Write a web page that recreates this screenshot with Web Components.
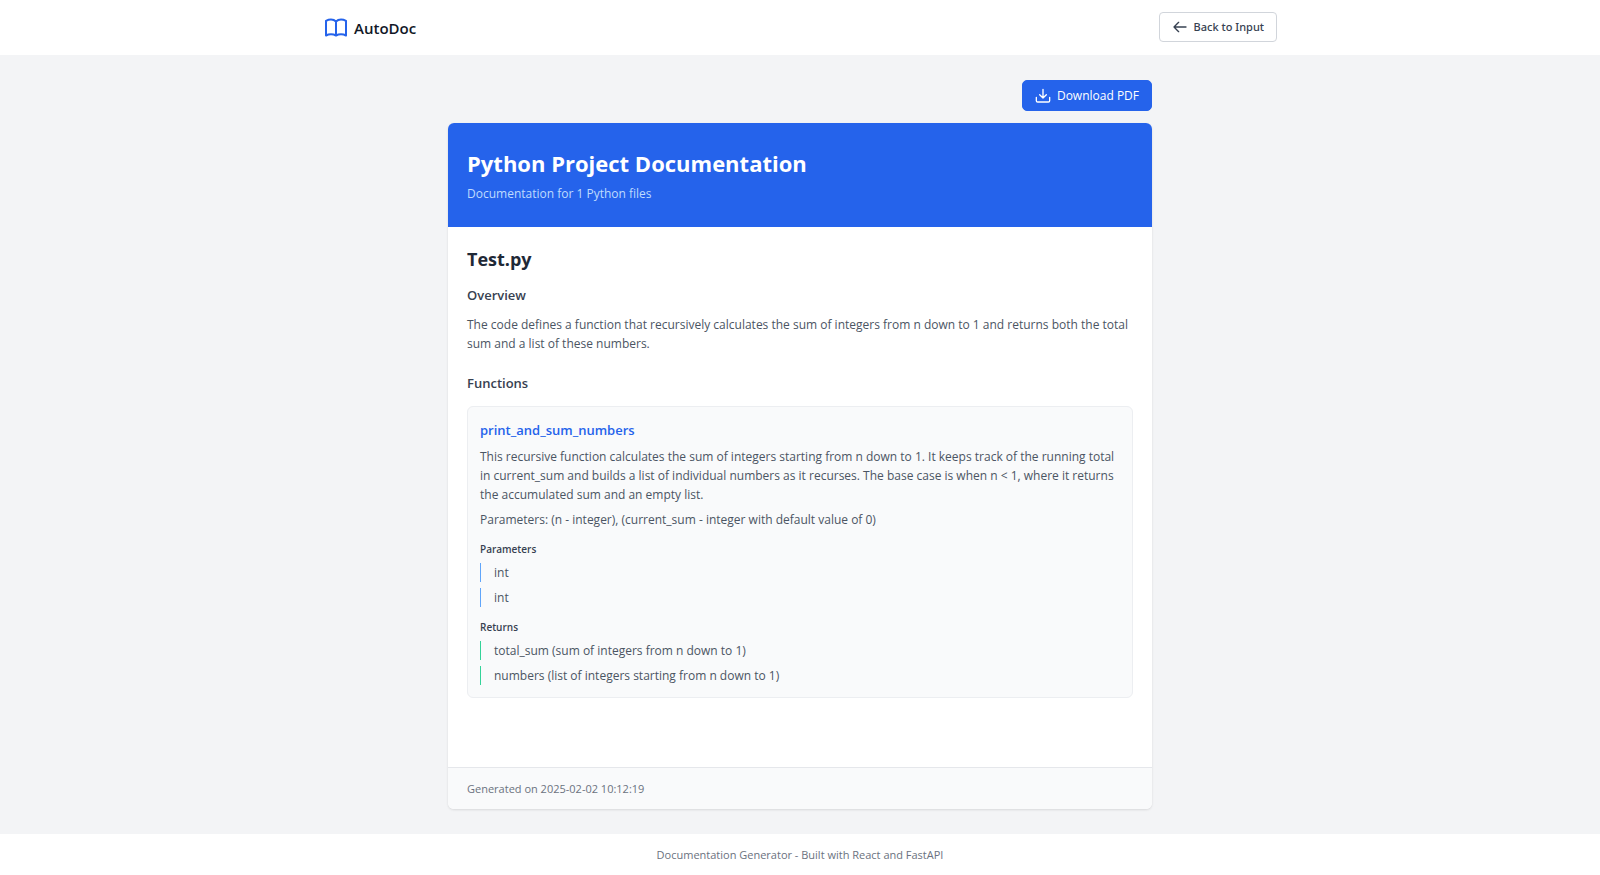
<!DOCTYPE html>
<html lang="en">
<head>
<meta charset="utf-8">
<meta name="viewport" content="width=device-width, initial-scale=1">
<title>AutoDoc</title>
<style>
  :root {
    --blue: #2563eb;
    --gray-50: #f9fafb;
    --gray-100: #f3f4f6;
    --gray-200: #e5e7eb;
    --gray-300: #d1d5db;
    --gray-500: #6b7280;
    --gray-600: #4b5563;
    --gray-700: #374151;
    --gray-800: #1f2937;
    --gray-900: #111827;
  }
  body {
    margin: 0;
    font-family: "Open Sans", "Noto Sans", sans-serif;
    font-size: 12px;
    line-height: 19px;
    color: var(--gray-600);
    background: var(--gray-100);
  }
</style>
</head>
<body>
<autodoc-app></autodoc-app>

<script>
const makeTemplate = (html) => {
  const template = document.createElement("template");
  template.innerHTML = html;
  return template;
};

class BaseElement extends HTMLElement {
  constructor() {
    super();
    this.attachShadow({ mode: "open" });
    this.shadowRoot.append(this.constructor.template.content.cloneNode(true));
  }
}

class AppHeader extends BaseElement {
  static template = makeTemplate(/*html*/ `
    <style>
      :host {
        display: block;
        background: #fff;
      }
      header {
        display: flex;
        align-items: center;
        justify-content: space-between;
        box-sizing: border-box;
        max-width: 1008px;
        margin: 0 auto;
        padding: 12px 27px 13px;
      }
      .brand {
        display: flex;
        align-items: center;
        gap: 6px;
        padding: 2px 0 0 1px;
        font-size: 15px;
        line-height: 24px;
        font-weight: 600;
        color: var(--gray-900);
      }
      svg {
        width: 24px;
        height: 20px;
        color: var(--blue);
      }
    </style>
    <header>
      <div class="brand">
        <svg viewBox="0 0 24 20" fill="none" stroke="currentColor" stroke-width="2" stroke-linecap="round" stroke-linejoin="round" aria-hidden="true">
          <path d="M12 3.500C10.500 2 8.500 1.500 7 1.500S3.500 2 2 2.800V17.500c1.500-.800 3.500-1.200 5-1.200s3.500.400 5 1.200c1.500-.800 3.500-1.200 5-1.200s3.500.400 5 1.200V2.800C20.500 2 18.500 1.500 17 1.500S13.500 2 12 3.500zM12 3.500v14"/>
        </svg>
        <span>AutoDoc</span>
      </div>
      <slot></slot>
    </header>
  `);
}

class AppButton extends BaseElement {
  static template = makeTemplate(/*html*/ `
    <style>
      :host {
        display: block;
      }
      button {
        display: flex;
        align-items: center;
        gap: 6px;
        margin: 0;
        padding: 6px 12px;
        border: 1px solid var(--gray-300);
        border-radius: 4px;
        background: #fff;
        color: var(--gray-700);
        font: 500 11px/16px "Noto Sans", sans-serif;
        cursor: pointer;
      }
      :host([primary]) button {
        border-color: var(--blue);
        border-radius: 5px;
        background: var(--blue);
        color: #fff;
        font: inherit;
        line-height: 17px;
      }
      ::slotted(svg) {
        width: 16px;
        height: 16px;
      }
    </style>
    <button type="button"><slot name="icon"></slot><slot></slot></button>
  `);
}

class DocCard extends BaseElement {
  static template = makeTemplate(/*html*/ `
    <style>
      :host {
        display: block;
        overflow: hidden;
        border-radius: 6px;
        background: #fff;
        box-shadow: 0 1px 3px rgba(0, 0, 0, 0.08), 0 1px 2px rgba(0, 0, 0, 0.04);
      }
      .head {
        padding: 25px 19px 24px;
        background: var(--blue);
        color: #bfdbfe;
      }
      .body {
        padding: 19px 19px 69px;
      }
      .foot {
        padding: 13px 19px 12px;
        border-top: 1px solid var(--gray-200);
        background: var(--gray-50);
        font-size: 11px;
        line-height: 16px;
        color: var(--gray-500);
      }
      ::slotted(h1) {
        margin: 0 0 6px;
        font-size: 22px;
        line-height: 30px;
        font-weight: 700;
        color: #fff;
      }
      ::slotted(p) {
        margin: 0;
      }
    </style>
    <div class="head"><slot name="head"></slot></div>
    <div class="body"><slot></slot></div>
    <div class="foot"><slot name="foot"></slot></div>
  `);
}

class DocFile extends BaseElement {
  static template = makeTemplate(/*html*/ `
    <style>
      :host {
        display: block;
      }
      ::slotted(h2) {
        margin: 0 0 12px;
        font-size: 18px;
        line-height: 26px;
        font-weight: 700;
        color: var(--gray-800);
      }
      ::slotted(h3) {
        margin: 0 0 9px;
        font-size: 13px;
        line-height: 22px;
        font-weight: 600;
        color: var(--gray-700);
      }
      ::slotted(p) {
        margin: 0 0 19px;
      }
      ::slotted(doc-function) {
        margin-top: 12px;
      }
    </style>
    <slot></slot>
  `);
}

class DocFunction extends BaseElement {
  static template = makeTemplate(/*html*/ `
    <style>
      :host {
        display: block;
        padding: 12px;
        border: 1px solid #eceef1;
        border-radius: 6px;
        background: var(--gray-50);
      }
      ::slotted(h4) {
        margin: 0;
        font-size: 13px;
        line-height: 22px;
        font-weight: 600;
        color: var(--blue);
      }
      ::slotted(p) {
        margin: 6px 0 0;
      }
    </style>
    <slot></slot>
  `);
}

class DocList extends BaseElement {
  static template = makeTemplate(/*html*/ `
    <style>
      :host {
        display: block;
        margin-top: 13px;
        --bar: #60a5fa;
      }
      :host([kind="returns"]) {
        --bar: #34d399;
      }
      h5 {
        margin: 0;
        font-size: 10px;
        line-height: 15px;
        font-weight: 600;
        color: var(--gray-700);
      }
      ul {
        margin: 0;
        padding: 0;
        list-style: none;
      }
      li {
        margin-top: 6px;
        padding-left: 13px;
        border-left: 1px solid var(--bar);
      }
    </style>
    <h5></h5>
    <ul></ul>
  `);

  connectedCallback() {
    this.shadowRoot.querySelector("h5").textContent = this.getAttribute("heading");
    const items = this.getAttribute("items").split("|").map((text) => {
      const li = document.createElement("li");
      li.textContent = text;
      return li;
    });
    this.shadowRoot.querySelector("ul").replaceChildren(...items);
  }
}

class AppFooter extends BaseElement {
  static template = makeTemplate(/*html*/ `
    <style>
      :host {
        display: block;
        background: #fff;
      }
      footer {
        padding: 13px 27px 12px;
        font-size: 11px;
        line-height: 16px;
        text-align: center;
        color: var(--gray-500);
      }
    </style>
    <footer><slot></slot></footer>
  `);
}

class AutodocApp extends BaseElement {
  static template = makeTemplate(/*html*/ `
    <style>
      :host {
        display: flex;
        flex-direction: column;
        min-height: 100vh;
      }
      main {
        flex: 1;
        box-sizing: border-box;
        width: 100%;
        max-width: 704px;
        margin: 0 auto;
        padding: 25px 0;
      }
      .actions {
        display: flex;
        justify-content: flex-end;
        margin-bottom: 12px;
      }
    </style>
    <app-header>
      <app-button>
        <svg slot="icon" viewBox="0 0 24 24" fill="none" stroke="currentColor" stroke-width="2" stroke-linecap="round" stroke-linejoin="round" aria-hidden="true">
          <path d="M21 12H3M10 5l-7 7 7 7"/>
        </svg>
        Back to Input
      </app-button>
    </app-header>
    <main>
      <div class="actions">
        <app-button primary>
          <svg slot="icon" viewBox="0 0 24 24" fill="none" stroke="currentColor" stroke-width="2" stroke-linecap="round" stroke-linejoin="round" aria-hidden="true">
            <path d="M2 14v5a2 2 0 0 0 2 2h16a2 2 0 0 0 2-2v-5M7 10l5 5 5-5M12 15V2"/>
          </svg>
          Download PDF
        </app-button>
      </div>
      <doc-card>
        <h1 slot="head">Python Project Documentation</h1>
        <p slot="head">Documentation for 1 Python files</p>
        <doc-file>
          <h2>Test.py</h2>
          <h3>Overview</h3>
          <p>The code defines a function that recursively calculates the sum of integers from n down to 1 and returns both the total sum and a list of these numbers.</p>
          <h3>Functions</h3>
          <doc-function>
            <h4>print_and_sum_numbers</h4>
            <p>This recursive function calculates the sum of integers starting from n down to 1. It keeps track of the running total in current_sum and builds a list of individual numbers as it recurses. The base case is when n &lt; 1, where it returns the accumulated sum and an empty list.</p>
            <p>Parameters: (n - integer), (current_sum - integer with default value of 0)</p>
            <doc-list heading="Parameters" items="int|int"></doc-list>
            <doc-list kind="returns" heading="Returns" items="total_sum (sum of integers from n down to 1)|numbers (list of integers starting from n down to 1)"></doc-list>
          </doc-function>
        </doc-file>
        <p slot="foot">Generated on 2025-02-02 10:12:19</p>
      </doc-card>
    </main>
    <app-footer>Documentation Generator - Built with React and FastAPI</app-footer>
  `);
}

customElements.define("app-header", AppHeader);
customElements.define("app-button", AppButton);
customElements.define("doc-card", DocCard);
customElements.define("doc-file", DocFile);
customElements.define("doc-function", DocFunction);
customElements.define("doc-list", DocList);
customElements.define("app-footer", AppFooter);
customElements.define("autodoc-app", AutodocApp);
</script>
</body>
</html>
